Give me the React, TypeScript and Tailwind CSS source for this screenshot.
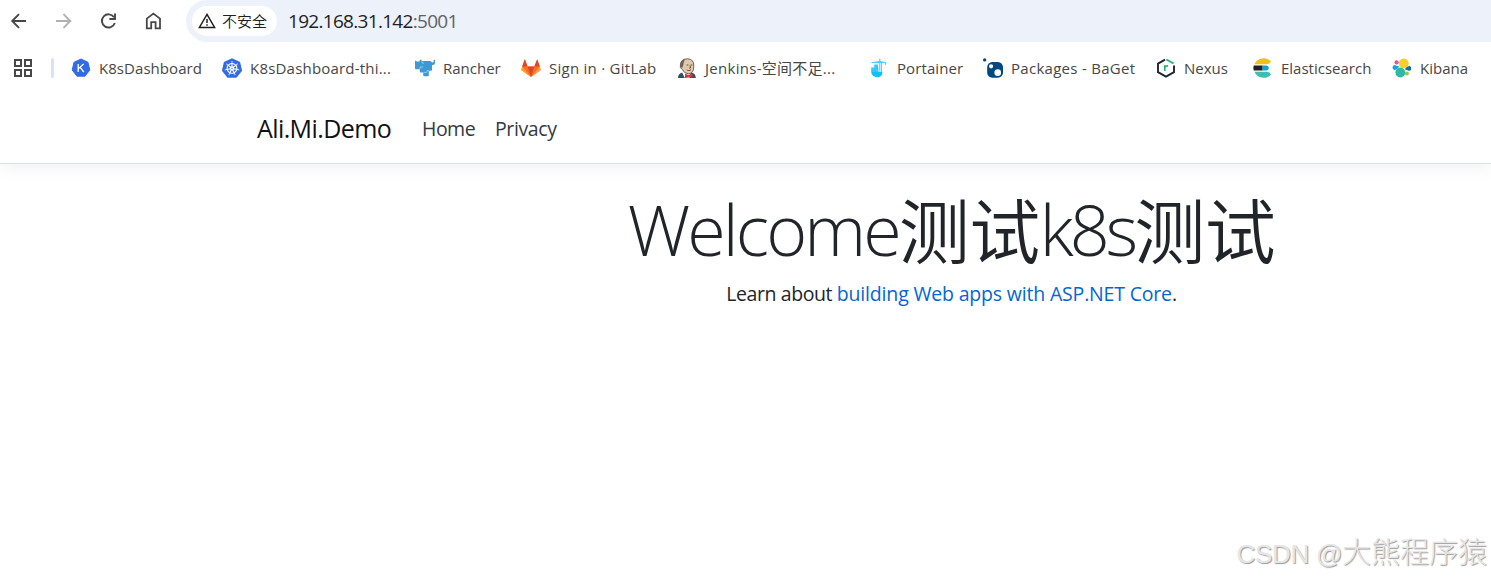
import React from 'react';
import { SiKubernetes, SiNuget } from 'react-icons/si';

const K8sIcon = () => (
  <svg viewBox="0 0 20 20" className="h-5 w-5">
    <path d="M10 1 L17 4.3 L18.8 12 L14 18.2 H6 L1.2 12 L3 4.3 Z" fill="#326ce5" stroke="#326ce5" strokeWidth="1" strokeLinejoin="round" />
    <path d="M7.2 6 V14 M12.6 6 L7.6 10.4 M9 9.2 L12.8 14" fill="none" stroke="#fff" strokeWidth="1.3" />
  </svg>
);

const RancherIcon = () => (
  <svg viewBox="0 0 20 20" className="h-5 w-5" fill="#3d98d3">
    <path d="M0 3.4 Q0 2.4 1 2.4 L1.5 3.6 H4.4 L5 1.8 H6.4 L6.8 3 H15.2 Q16.4 3 16.8 4.4 H17.8 Q18.8 4.2 18.8 2 L20 2 Q20.6 6.8 18 7 H17 V12 Q17 12.8 16 12.8 H13.8 V17.2 Q13.8 18.2 12.8 18.2 H9.2 Q8.2 18.2 8.2 17.2 V14.6 H5.8 Q4.8 14.6 4.8 13.6 V11.2 H1 Q0 11.2 0 10.2 Z" />
    <path d="M5 10.8 V9 H8.2 M8.4 14.4 H12 V12.6 H13.8 M7 3.2 V5 H9" fill="none" stroke="#b5dbf1" strokeWidth=".7" />
  </svg>
);

const GitLabIcon = () => (
  <svg viewBox="0 0 20 20" className="h-5 w-5">
    <path d="M10 19 L0.4 12 L1.2 8.6 L3.8 1.2 L6.6 8.6 H13.4 L16.2 1.2 L18.8 8.6 L19.6 12 Z" fill="#fc6d26" />
    <path d="M3.8 1.2 L6.6 8.6 H1.2 Z M16.2 1.2 L18.8 8.6 H13.4 Z M10 19 L6.6 8.6 H13.4 Z" fill="#e24329" />
    <path d="M1.2 8.6 L0.2 12 L10 19 Z M18.8 8.6 L19.8 12 L10 19 Z" fill="#fca326" />
  </svg>
);

const JenkinsIcon = () => (
  <svg viewBox="0 0 20 20" className="h-5 w-5">
    <path d="M1 20 Q0.8 15.4 5.5 14.4 L14.5 14.6 Q18.6 15.6 18.8 20 Z" fill="#335061" />
    <path d="M5 14 L7.4 19.6 H12.8 L14 14 Z" fill="#fff" />
    <path d="M3.4 6.8 Q3.8 0.8 10.4 0.8 Q17 1 16.8 8 Q17 15.4 11.6 15.8 Q7 15.6 5.4 11.6 Q2.4 10 3.4 6.8 Z" fill="#e3c9ab" stroke="#4b443f" strokeWidth=".8" />
    <path d="M3.2 8.8 Q2.6 2.5 8.4 1 Q6.2 4 6.5 6.6 L5.2 10 Z" fill="#6e6259" />
    <path d="M9.6 7 H11.4 M13.6 7 H15.4 M13 7.4 L13.6 10 H12.2 M9.8 12 Q12 13.4 14 11.8" fill="none" stroke="#5a4436" strokeWidth=".9" />
    <path d="M8 15.8 L11.6 17.1 L15.4 15.6 V19.8 L11.6 18.7 L8 20 Z" fill="#d33833" />
  </svg>
);

const PortainerIcon = () => (
  <svg viewBox="0 0 20 20" className="h-5 w-5" fill="#13bef9">
    <path d="M10.2 0.8 H11.4 V3 L17.4 4.2 V5 H11.4 V13.4 H10.2 V5 H2.4 V4.2 L10.2 3 Z" opacity=".75" />
    <path d="M12.2 5 H13 V14 H12.2 Z M16 5 H16.8 V7 H16 Z M5.2 6.4 H9 V9.6 H5.2 Z M2.2 9.6 H9.4 V14 H2.2 Z" opacity=".85" />
    <path d="M2.2 13.8 H13.2 Q14 17.2 11.2 18.4 Q8.8 20 6.2 18.8 Q2.4 17.6 2.2 13.8 Z" />
  </svg>
);

const NexusIcon = () => (
  <svg viewBox="0 0 20 20" className="h-5 w-5" fill="none" strokeWidth="1.9">
    <path d="M9 1.6 L2 5.6 V14.2 L10 18.6 L18 14.2 V7.4" stroke="#1f2433" />
    <path d="M10.4 1.5 L17.6 5.5" stroke="#1bb76e" />
    <path d="M8.8 13 V7.2 M8.8 9.6 Q9.4 7.6 12 7.9" stroke="#1bb76e" strokeWidth="1.6" />
  </svg>
);

const ElasticsearchIcon = () => (
  <svg viewBox="0 0 20 20" className="h-5 w-5">
    <path d="M1.4 6.2 Q4 0.2 10.6 0.2 Q15.4 0.4 18 3.8 Q16.6 6.2 14 6.2 Z" fill="#f0bf1a" />
    <path d="M.7 7.6 H9.6 V12.4 H.7 Q0 10 .7 7.6 Z" fill="#231f20" />
    <path d="M9.6 7.6 H13.4 Q15.8 7.8 15.8 10 Q15.8 12.3 13.4 12.4 H9.6 Z" fill="#07a5de" />
    <path d="M1.4 13.8 H14 Q16.8 13.8 18 16.4 Q15.2 19.8 10.6 19.8 Q4 19.6 1.4 13.8 Z" fill="#3ebeb0" />
  </svg>
);

const KibanaIcon = () => (
  <svg viewBox="0 0 20 20" className="h-5 w-5">
    <circle cx="11.8" cy="5.4" r="4.9" fill="#f4d029" />
    <circle cx="8.3" cy="14.5" r="4.9" fill="#2eb8a6" />
    <circle cx="4.6" cy="4.4" r="2.1" fill="#ee5096" />
    <path d="M2.3 7.1 L7.3 8.6 Q5.6 11.2 2.5 12.2 Q.4 11.4 .6 9.3 Q.8 7.7 2.3 7.1 Z" fill="#17a2e0" />
    <path d="M17.6 7.7 Q19.8 9 19.2 11.2 Q18.6 12.9 17 12.8 L12.7 11.2 Q14.4 8.5 17.6 7.7 Z" fill="#136c99" />
    <circle cx="14.9" cy="15.4" r="2" fill="#93c83e" />
  </svg>
);

interface Bookmark {
  label: string;
  icon: React.ReactNode;
  item: string;
  text: string;
}

const bookmarks: Bookmark[] = [
  { label: 'K8sDashboard', icon: <K8sIcon />, item: 'w-[151px]', text: 'tracking-[0.05px]' },
  { label: 'K8sDashboard-thi...', icon: <SiKubernetes className="h-5 w-5 text-[#326ce5]" />, item: 'w-[193px]', text: 'tracking-[0.2px]' },
  { label: 'Rancher', icon: <RancherIcon />, item: 'w-[106px]', text: '' },
  { label: 'Sign in · GitLab', icon: <GitLabIcon />, item: 'w-[156px]', text: 'tracking-[0.26px]' },
  { label: 'Jenkins-空间不足...', icon: <JenkinsIcon />, item: 'w-[192px]', text: 'tracking-[0.28px]' },
  { label: 'Portainer', icon: <PortainerIcon />, item: 'w-[114px]', text: 'tracking-[0.1px]' },
  { label: 'Packages - BaGet', icon: <SiNuget className="h-5 w-5 text-[#004880]" />, item: 'w-[173px]', text: 'tracking-[0.28px]' },
  { label: 'Nexus', icon: <NexusIcon />, item: 'w-[97px]', text: '' },
  { label: 'Elasticsearch', icon: <ElasticsearchIcon />, item: 'w-[139px]', text: '' },
  { label: 'Kibana', icon: <KibanaIcon />, item: 'w-[99px]', text: '' },
];

const Toolbar = () => (
  <div className="flex h-[42px] items-center">
    <div className="flex w-[186px] shrink-0 items-center gap-[25px] pl-[9px] text-[#474747]">
      <svg viewBox="0 0 20 20" className="h-5 w-5" fill="none" stroke="currentColor" strokeWidth="1.9">
        <path d="M17 10 H3.5 M10 3.2 L3.2 10 L10 16.8" />
      </svg>
      <svg viewBox="0 0 20 20" className="h-5 w-5 text-[#b0b0b0]" fill="none" stroke="currentColor" strokeWidth="1.9">
        <path d="M2 10 H16 M9.5 3.2 L16.3 10 L9.5 16.8" />
      </svg>
      <svg viewBox="0 0 20 20" className="h-5 w-5" fill="none" stroke="currentColor" strokeWidth="1.9">
        <path d="M15 6.2 A6.6 6.6 0 1 0 15.8 12 M16 2.5 V8 H10.4" />
      </svg>
      <svg viewBox="0 0 20 20" className="h-5 w-5" fill="none" stroke="currentColor" strokeWidth="1.8">
        <path d="M2.8 17.3 V7.6 L9.4 2.6 L16 7.6 V17.3 H11.6 V11.2 H7.2 V17.3 Z" />
      </svg>
    </div>
    <div className="flex h-[42px] flex-1 items-center rounded-l-full bg-[#ecf1fa] pl-1.5">
      <div className="flex h-[30px] w-[85px] items-center rounded-full bg-white pl-1.5">
        <svg viewBox="0 0 18 18" className="h-[18px] w-[18px] shrink-0" fill="none" stroke="#1f1f1f" strokeWidth="1.5">
          <path d="M9 2.4 L16.6 15.4 H1.4 Z M9 7 V11 M9 12.2 V13.8" />
        </svg>
        <span className="ml-1.5 font-['Noto_Sans_CJK_SC',sans-serif] text-[15px] leading-5 font-[350] whitespace-nowrap text-[#1f1f1f]">不安全</span>
      </div>
      <span className="ml-[11px] text-[19px] tracking-[-0.7px] text-[#1f1f1f]">
        192.168.31.142<span className="text-[#5f6368]">:5001</span>
      </span>
    </div>
  </div>
);

const BookmarkBar = () => (
  <div className="relative z-10 flex h-[52px] items-center bg-white pl-[13px]">
    <svg viewBox="0 0 20 20" className="h-5 w-5" fill="none" stroke="#474747" strokeWidth="2">
      <path d="M2 2 H8 V8 H2 Z M12 2 H18 V8 H12 Z M2 12 H8 V18 H2 Z M12 12 H18 V18 H12 Z" />
    </svg>
    <div className="mr-[17px] ml-[18px] h-5 w-[3px] rounded-full bg-[#d3e3fd]" />
    {bookmarks.map((b) => (
      <div key={b.label} className={`flex shrink-0 items-center gap-2 ${b.item}`}>
        <span className="shrink-0">{b.icon}</span>
        <span className={`text-[15px] whitespace-nowrap text-[#474747] ${b.text}`}>{b.label}</span>
      </div>
    ))}
  </div>
);

const App = () => {
  return (
    <div className="relative h-[579px] w-[1491px] overflow-hidden bg-white font-['Open_Sans','Noto_Sans_CJK_SC',sans-serif]">
      <Toolbar />
      <BookmarkBar />
      <nav className="flex h-[70px] items-center border-b border-[#dee2e6] pl-[257px] shadow-[0_5px_15px_rgba(0,0,0,0.05)]">
        <a className="w-[165px] text-[25px] tracking-[-0.6px] text-[#111]">Ali.Mi.Demo</a>
        <a className="w-[73px] text-[19.5px] tracking-[-0.5px] text-[#343a40]">Home</a>
        <a className="text-[19.5px] tracking-[-0.4px] text-[#343a40]">Privacy</a>
      </nav>
      <main className="flex flex-col items-center pt-[23px] pl-[412px]">
        <h1 className="h-[84px] text-[70px] leading-[84px] font-light whitespace-nowrap text-[#212529]">
          <span className="align-[2px] tracking-[-2.9px]">Welcome</span>
          <span className="text-[71px] font-[350] tracking-[-0.5px]">测试</span>
          <span className="align-[2px] tracking-[-4px]">k8s</span>
          <span className="text-[71px] font-[350] tracking-[-0.5px]">测试</span>
        </h1>
        <p className="mt-2 text-[19.5px] leading-[30px] tracking-[-0.23px] text-[#212529]">
          <span className="tracking-[-0.4px]">Learn about </span>
          <a className="tracking-[-0.18px] text-[#0366d6]">building Web apps with ASP.NET Core</a>.
        </p>
      </main>
      <div className="absolute right-1 bottom-[5px] font-['Liberation_Sans','Noto_Sans_CJK_SC',sans-serif] text-[26px] leading-10 font-light text-[#e6e6e6] [text-shadow:1px_1px_1px_#999]">
        <span className="tracking-[-0.3px]">CSDN @</span>
        <span className="text-[29px]">大熊程序猿</span>
      </div>
    </div>
  );
};

export default App;
